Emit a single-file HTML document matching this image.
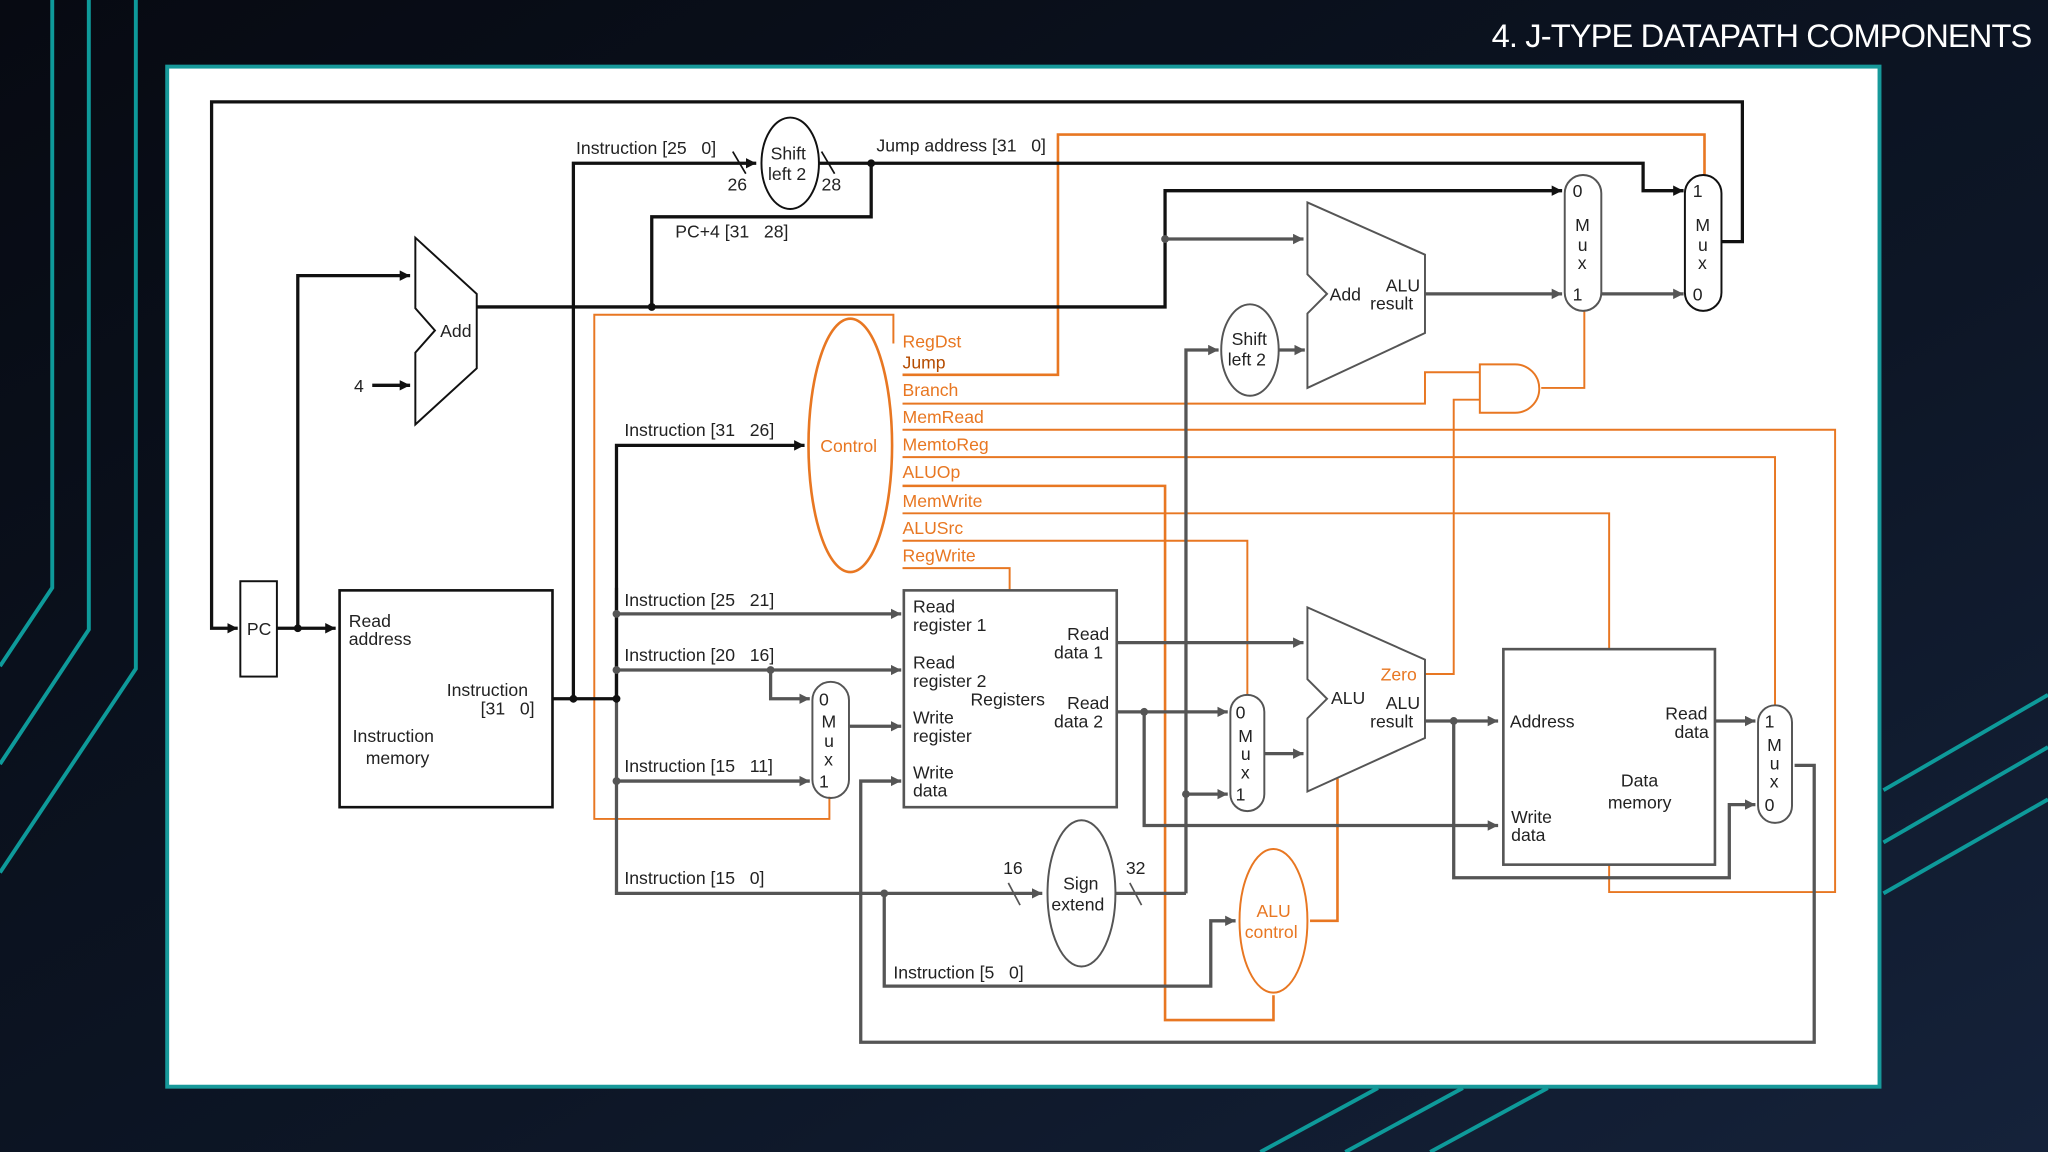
<!DOCTYPE html>
<html><head><meta charset="utf-8"><style>
html,body{margin:0;padding:0;width:2048px;height:1152px;overflow:hidden;background:#0b111d}
svg{display:block}
text{font-family:"Liberation Sans",Arial,sans-serif;font-size:13.5px;fill:#222;white-space:pre}
.o{fill:#e87722}
</style></head><body>
<svg width="2048" height="1152" viewBox="0 0 1568 882" preserveAspectRatio="none" xmlns="http://www.w3.org/2000/svg" xml:space="preserve">
<defs>
<linearGradient id="bg" x1="0" y1="0" x2="1" y2="1">
<stop offset="0" stop-color="#070a12"/><stop offset="0.6" stop-color="#0d1626"/><stop offset="1" stop-color="#15223a"/>
</linearGradient>
<marker id="ak" markerUnits="userSpaceOnUse" markerWidth="10" markerHeight="10" refX="8" refY="4" orient="auto"><path d="M0,0 L8,4 L0,8 Z" fill="#111"/></marker>
<marker id="ag" markerUnits="userSpaceOnUse" markerWidth="10" markerHeight="10" refX="8" refY="4" orient="auto"><path d="M0,0 L8,4 L0,8 Z" fill="#555"/></marker>
</defs>
<rect width="1568" height="882" fill="url(#bg)"/>
<g stroke="#0e9a9a" stroke-width="3" fill="none">
<polyline points="104,0 104,512 0,668"/>
<polyline points="68,0 68,482 0,585"/>
<polyline points="40,0 40,450 0,510"/>
<line x1="1442" y1="605" x2="1568" y2="532"/>
<line x1="1442" y1="645" x2="1568" y2="572"/>
<line x1="1442" y1="684" x2="1568" y2="612"/>
<line x1="965" y1="882" x2="1055" y2="833"/>
<line x1="1030" y1="882" x2="1120" y2="833"/>
<line x1="1095" y1="882" x2="1185" y2="833"/>
</g>
<text x="1556" y="36" text-anchor="end" style="font-size:25px;fill:#fff" textLength="414">4. J-TYPE DATAPATH COMPONENTS</text>
<rect x="128" y="51" width="1311" height="781" fill="#fff" stroke="#17999a" stroke-width="3"/>

<g stroke="#e87722" stroke-width="1.5" fill="none">
<polyline points="684,263 684,241 455,241 455,627 635,627 635,610"/>
<polyline points="691,287 810,287 810,103 1305,103 1305,134" stroke-width="2"/>
<polyline points="691,309 1091,309 1091,285 1133,285"/>
<polyline points="1091,516 1113,516 1113,306 1133,306"/>
<polyline points="1180,297 1213,297 1213,238"/>
<polyline points="691,329 1405,329 1405,683 1232,683 1232,662"/>
<polyline points="691,350 1359,350 1359,540"/>
<polyline points="691,372 892,372 892,781 975,781 975,762" stroke-width="2"/>
<polyline points="691,393 1232,393 1232,497"/>
<polyline points="691,414 955,414 955,532"/>
<polyline points="691,435 773,435 773,452"/>
<polyline points="1003,705 1024,705 1024,596" stroke-width="2"/>
<ellipse cx="651" cy="341" rx="32" ry="97" stroke-width="2"/>
<ellipse cx="975" cy="705" rx="26" ry="55"/>
</g>

<g stroke="#555" stroke-width="2.5" fill="none">
<polyline points="892,183 998,183" marker-end="url(#ag)"/>
<polyline points="1091,225 1196,225" marker-end="url(#ag)"/>
<polyline points="1226,225 1289,225" marker-end="url(#ag)"/>
<polyline points="979,268 999,268" marker-end="url(#ag)"/>
<polyline points="908,684 908,268 933,268" marker-end="url(#ag)"/>
<polyline points="472,470 690,470" marker-end="url(#ag)"/>
<polyline points="472,513 690,513" marker-end="url(#ag)"/>
<polyline points="590,513 590,535 620,535" marker-end="url(#ag)"/>
<polyline points="472,598 620,598" marker-end="url(#ag)"/>
<polyline points="472,450 472,684 798,684" marker-end="url(#ag)"/>
<polyline points="650,556 690,556" marker-end="url(#ag)"/>
<polyline points="1374,586 1389,586 1389,798 659,798 659,598 690,598" marker-end="url(#ag)"/>
<polyline points="854,684 908,684"/>
<polyline points="677,684 677,755 927,755 927,705 946,705" marker-end="url(#ag)"/>
<polyline points="855,492 998,492" marker-end="url(#ag)"/>
<polyline points="855,545 940,545" marker-end="url(#ag)"/>
<polyline points="876,545 876,632 1147,632" marker-end="url(#ag)"/>
<polyline points="908,608 940,608" marker-end="url(#ag)"/>
<polyline points="968,577 998,577" marker-end="url(#ag)"/>
<polyline points="1091,552 1147,552" marker-end="url(#ag)"/>
<polyline points="1113,552 1113,672 1324,672 1324,616 1344,616" marker-end="url(#ag)"/>
<polyline points="1313,552 1344,552" marker-end="url(#ag)"/>
<line x1="772" y1="676" x2="781" y2="693" stroke-width="1.3"/>
<line x1="865" y1="676" x2="874" y2="693" stroke-width="1.3"/>
<rect x="692" y="452" width="163" height="166" stroke-width="2"/>
<rect x="1151" y="497" width="162" height="165" stroke-width="2"/>
<rect x="622" y="522" width="28" height="89" rx="14" stroke-width="1.5"/>
<rect x="942" y="532" width="26" height="89" rx="13" stroke-width="1.5"/>
<rect x="1346" y="540" width="26" height="90" rx="13" stroke-width="1.5"/>
<rect x="1198" y="134" width="28" height="104" rx="14" stroke-width="1.5"/>
<ellipse cx="957" cy="268" rx="22" ry="35" stroke-width="1.5"/>
<ellipse cx="828" cy="684" rx="26" ry="56" stroke-width="1.5"/>
<polygon points="1001,155 1091,195 1091,255 1001,297 1001,240 1016,225 1001,210" stroke-width="1.5"/>
<polygon points="1001,465 1091,505 1091,565 1001,606 1001,550 1016,535 1001,520" stroke-width="1.5"/>
<path d="M1133,279 H1160 A18.5,18.5 0 0 1 1160,316 H1133 Z" stroke="#e87722" stroke-width="1.5"/>
</g>

<g stroke="#111" stroke-width="2.5" fill="none">
<polyline points="1318,185 1334,185 1334,78 162,78 162,481 182,481" marker-end="url(#ak)"/>
<polyline points="212,481 257,481" marker-end="url(#ak)"/>
<polyline points="228,481 228,211 314,211" marker-end="url(#ak)"/>
<polyline points="285,295 314,295" marker-end="url(#ak)"/>
<polyline points="365,235 892,235 892,146 1196,146" marker-end="url(#ak)"/>
<polyline points="499,235 499,166 667,166 667,125"/>
<polyline points="423,535 472,535"/>
<polyline points="439,535 439,125 579,125" marker-end="url(#ak)"/>
<polyline points="627,125 1258,125 1258,146 1289,146" marker-end="url(#ak)"/>
<polyline points="472,535 472,341 616,341" marker-end="url(#ak)"/>
<line x1="561" y1="116" x2="571" y2="133" stroke-width="1.3"/>
<line x1="629" y1="116" x2="639" y2="133" stroke-width="1.3"/>
<rect x="184" y="445" width="28" height="73" stroke-width="1.5"/>
<rect x="260" y="452" width="163" height="166" stroke-width="2"/>
<polygon points="318,182 365,225 365,282 318,325 318,270 333,253 318,236" stroke-width="1.5"/>
<ellipse cx="605" cy="125" rx="22" ry="35" stroke-width="1.5"/>
<rect x="1290" y="134" width="28" height="104" rx="14" stroke-width="1.5"/>
</g>
<g fill="#111">
<circle cx="228" cy="481" r="3"/><circle cx="499" cy="235" r="3"/><circle cx="667" cy="125" r="3"/>
<circle cx="439" cy="535" r="3"/><circle cx="472" cy="535" r="3"/>
</g>
<g fill="#555">
<circle cx="892" cy="183" r="3"/><circle cx="472" cy="470" r="3"/><circle cx="472" cy="513" r="3"/>
<circle cx="590" cy="513" r="3"/><circle cx="472" cy="598" r="3"/><circle cx="677" cy="684" r="3"/>
<circle cx="876" cy="545" r="3"/><circle cx="908" cy="608" r="3"/><circle cx="1113" cy="552" r="3"/>
</g>

<text x="189" y="486">PC</text>
<text x="337" y="258">Add</text>
<text x="271" y="300">4</text>
<text x="267" y="480">Read</text><text x="267" y="494">address</text>
<text x="342" y="533">Instruction</text><text x="368" y="547">[31   0]</text>
<text x="270" y="568">Instruction</text><text x="280" y="585">memory</text>
<text x="441" y="118">Instruction [25   0]</text>
<text x="590" y="122">Shift</text><text x="588" y="138">left 2</text>
<text x="557" y="146">26</text><text x="629" y="146">28</text>
<text x="671" y="116">Jump address [31   0]</text>
<text x="517" y="182">PC+4 [31   28]</text>
<text x="478" y="334">Instruction [31   26]</text>
<text x="691" y="282" style="fill:#b54c00">Jump</text>
<text x="1296" y="151">1</text><text x="1298" y="177">M</text><text x="1300" y="192">u</text><text x="1300" y="206">x</text><text x="1296" y="230">0</text>
<g style="fill:#444">
<text x="1204" y="151">0</text><text x="1206" y="177">M</text><text x="1208" y="192">u</text><text x="1208" y="206">x</text><text x="1204" y="230">1</text>
<text x="1018" y="230">Add</text><text x="1061" y="223">ALU</text><text x="1049" y="237">result</text>
<text x="943" y="264">Shift</text><text x="940" y="280">left 2</text>
<text x="478" y="464">Instruction [25   21]</text>
<text x="478" y="506">Instruction [20   16]</text>
<text x="478" y="591">Instruction [15   11]</text>
<text x="478" y="677">Instruction [15   0]</text>
<text x="684" y="749">Instruction [5   0]</text>
<text x="627" y="540">0</text><text x="629" y="557">M</text><text x="631" y="572">u</text><text x="631" y="586">x</text><text x="627" y="603">1</text>
<text x="699" y="469">Read</text><text x="699" y="483">register 1</text>
<text x="699" y="512">Read</text><text x="699" y="526">register 2</text>
<text x="743" y="540">Registers</text>
<text x="699" y="554">Write</text><text x="699" y="568">register</text>
<text x="699" y="596">Write</text><text x="699" y="610">data</text>
<text x="817" y="490">Read</text><text x="807" y="504">data 1</text>
<text x="817" y="543">Read</text><text x="807" y="557">data 2</text>
<text x="768" y="669">16</text><text x="862" y="669">32</text>
<text x="814" y="681">Sign</text><text x="805" y="697">extend</text>
<text x="946" y="550">0</text><text x="948" y="568">M</text><text x="950" y="582">u</text><text x="950" y="596">x</text><text x="946" y="613">1</text>
<text x="1019" y="539">ALU</text><text x="1061" y="543">ALU</text><text x="1049" y="557">result</text>
<text x="1156" y="557">Address</text>
<text x="1275" y="551">Read</text><text x="1282" y="565">data</text>
<text x="1241" y="602">Data</text><text x="1231" y="619">memory</text>
<text x="1157" y="630">Write</text><text x="1157" y="644">data</text>
<text x="1351" y="557">1</text><text x="1353" y="575">M</text><text x="1355" y="589">u</text><text x="1355" y="603">x</text><text x="1351" y="621">0</text>
</g>
<text class="o" x="628" y="346">Control</text>
<text class="o" x="691" y="266">RegDst</text>
<text class="o" x="691" y="303">Branch</text>
<text class="o" x="691" y="324">MemRead</text>
<text class="o" x="691" y="345">MemtoReg</text>
<text class="o" x="691" y="366">ALUOp</text>
<text class="o" x="691" y="388">MemWrite</text>
<text class="o" x="691" y="409">ALUSrc</text>
<text class="o" x="691" y="430">RegWrite</text>
<text class="o" x="1057" y="521">Zero</text>
<text class="o" x="962" y="702">ALU</text><text class="o" x="953" y="718">control</text>
</svg>
</body></html>
